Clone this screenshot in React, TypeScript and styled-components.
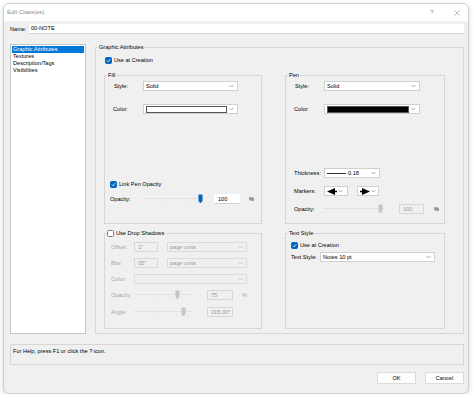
import React from "react";
import styled, { createGlobalStyle } from "styled-components";

const FONT = `"Liberation Sans", Arial, sans-serif`;

const Global = createGlobalStyle`
  html, body { margin: 0; padding: 0; background: #ffffff; }
  body { font-family: ${FONT}; font-size: 5.6px; line-height: 7px; color: #000; }
  * { box-sizing: border-box; }
`;

const Window = styled.div`
  margin: 3px 0 0 3px;
  width: 466px;
  height: 391px;
  border: 1px solid #cfcfcf;
  border-radius: 6px;
  box-shadow: 0 2px 5px rgba(0, 0, 0, 0.16);
  background: #f0f0f0;
  overflow: hidden;
  display: flex;
  flex-direction: column;
`;

const TitleBar = styled.div`
  height: 17px;
  flex: none;
  background: #ffffff;
  display: flex;
  align-items: center;
  padding-left: 3px;
  color: #8c8c8c;
  font-size: 6px;
`;

const TitleButtons = styled.div`
  margin-left: auto;
  display: flex;
  gap: 3px;
`;

const TitleBtn = styled.div`
  width: 22px;
  height: 17px;
  display: flex;
  align-items: center;
  justify-content: center;
  color: #8c8c8c;
  font-size: 6px;
`;

const Body = styled.div`
  flex: 1;
  display: flex;
  flex-direction: column;
  padding: 3px 4px 0 6px;
`;

const NameRow = styled.div`
  display: flex;
  align-items: center;
  height: 10px;
`;

const NameLabel = styled.span`
  width: 19px;
  flex: none;
`;

const NameInput = styled.div`
  flex: 1;
  height: 10px;
  background: #ffffff;
  border-bottom: 1px solid #d6d6d6;
  padding-left: 2px;
  display: flex;
  align-items: center;
`;

const MainRow = styled.div`
  display: flex;
  margin-top: 10px;
  height: 290px;
  gap: 9px;
`;

const ListBox = styled.div`
  width: 76px;
  flex: none;
  background: #ffffff;
  border: 1px solid #c4c4c4;
  padding: 1px;
`;

const ListItem = styled.div<{ $selected?: boolean }>`
  height: 7px;
  line-height: 7px;
  padding-left: 1px;
  background: ${(p) => (p.$selected ? "#0078d7" : "transparent")};
  color: ${(p) => (p.$selected ? "#ffffff" : "#000")};
`;

const Group = styled.div<{ $mt?: number }>`
  position: relative;
  border: 1px solid #d6d6d6;
  margin-top: ${(p) => p.$mt ?? 0}px;
  display: flex;
  flex-direction: column;
`;

const MainGroup = styled(Group)`
  flex: 1;
  margin-top: 3px;
`;

const Legend = styled.div<{ $left?: number }>`
  position: absolute;
  top: -4px;
  left: ${(p) => p.$left ?? 2}px;
  padding: 0 1px;
  line-height: 7px;
  background: #f0f0f0;
  display: flex;
  align-items: center;
`;

const CheckRow = styled.div<{ $mt?: number; $pl?: number }>`
  display: flex;
  align-items: center;
  height: 7px;
  margin-top: ${(p) => p.$mt ?? 0}px;
  padding-left: ${(p) => p.$pl ?? 0}px;
`;

const Box = styled.span<{ $checked?: boolean }>`
  width: 7px;
  height: 7px;
  flex: none;
  border-radius: 1.5px;
  background: ${(p) => (p.$checked ? "#0067c0" : "#ffffff")};
  border: 1px solid ${(p) => (p.$checked ? "#0067c0" : "#7a7a7a")};
  display: flex;
  align-items: center;
  justify-content: center;
  margin-right: 2px;
`;

const Grid = styled.div`
  display: grid;
  grid-template-columns: 158px 160px;
  grid-template-rows: 149px 96px;
  column-gap: 23px;
  row-gap: 9px;
  margin: 11px 0 0 8px;
`;

const Row = styled.div<{ $mt?: number; $pl?: number }>`
  display: flex;
  align-items: center;
  height: 10px;
  margin-top: ${(p) => p.$mt ?? 0}px;
  padding-left: ${(p) => p.$pl ?? 0}px;
`;

const Label = styled.span<{ $w: number; $disabled?: boolean }>`
  width: ${(p) => p.$w}px;
  flex: none;
  color: ${(p) => (p.$disabled ? "#a6a6a6" : "#000")};
`;

const Select = styled.div<{ $w: number; $disabled?: boolean; $mr?: number }>`
  width: ${(p) => p.$w}px;
  height: 10px;
  flex: none;
  margin-right: ${(p) => p.$mr ?? 0}px;
  background: ${(p) => (p.$disabled ? "#f0f0f0" : "#ffffff")};
  border: 1px solid ${(p) => (p.$disabled ? "#dadada" : "#d0d0d0")};
  color: ${(p) => (p.$disabled ? "#9a9a9a" : "#000")};
  display: flex;
  align-items: center;
  padding: 0 2px 0 2px;
`;

const SelectText = styled.span`
  flex: 1;
  display: flex;
  align-items: center;
  white-space: nowrap;
`;

const Swatch = styled.span<{ $color: string }>`
  flex: 1;
  height: 7px;
  background: ${(p) => p.$color};
  border: 1px solid #555;
  margin-right: 2px;
`;

const Input = styled.div<{ $w: number; $disabled?: boolean; $mr?: number }>`
  width: ${(p) => p.$w}px;
  height: 10px;
  flex: none;
  margin-right: ${(p) => p.$mr ?? 0}px;
  background: ${(p) => (p.$disabled ? "#f0f0f0" : "#ffffff")};
  border: 1px solid ${(p) => (p.$disabled ? "#d6d6d6" : "#ffffff")};
  border-bottom-color: ${(p) => (p.$disabled ? "#d6d6d6" : "#d0d0d0")};
  color: ${(p) => (p.$disabled ? "#9a9a9a" : "#000")};
  display: flex;
  align-items: center;
  padding-left: 3px;
`;

const Pct = styled.span<{ $disabled?: boolean }>`
  color: ${(p) => (p.$disabled ? "#a6a6a6" : "#000")};
`;

const Track = styled.div<{ $w: number; $mr: number }>`
  position: relative;
  width: ${(p) => p.$w}px;
  height: 10px;
  flex: none;
  margin-right: ${(p) => p.$mr}px;
  background:
    linear-gradient(#e2e2e2, #e2e2e2) 0 4px / 100% 1px no-repeat,
    repeating-linear-gradient(90deg, #dcdcdc 0 1px, transparent 1px 6px) 0 8px / 100% 1px no-repeat;
`;

const Thumb = styled.svg`
  position: absolute;
  top: 0;
  width: 5px;
  height: 10px;
  margin-left: -2.5px;
`;

const Line = styled.span`
  width: 19px;
  height: 1px;
  background: #333;
  margin-right: 2px;
`;

const StatusBar = styled.div`
  margin-top: 10px;
  height: 21px;
  border: 1px solid #d6d6d6;
  padding: 3px 2px;
`;

const ButtonRow = styled.div`
  margin-top: 7px;
  display: flex;
  justify-content: flex-end;
  gap: 9px;
`;

const Button = styled.div`
  width: 39px;
  height: 12px;
  background: #fdfdfd;
  border: 1px solid #dcdcdc;
  display: flex;
  align-items: center;
  justify-content: center;
`;

const Chevron = ({ disabled }: { disabled?: boolean }) => (
  <svg width="5" height="4" viewBox="0 0 5 4" style={{ flex: "none", marginRight: 1 }}>
    <polyline points="0.5,1 2.5,3 4.5,1" fill="none" stroke={disabled ? "#bbb" : "#888"} strokeWidth="0.7" />
  </svg>
);

const Check = () => (
  <svg width="5" height="5" viewBox="0 0 5 5">
    <polyline points="0.8,2.6 2,3.8 4.2,1.2" fill="none" stroke="#fff" strokeWidth="0.8" />
  </svg>
);

const Checkbox = ({ checked }: { checked?: boolean }) => <Box $checked={checked}>{checked && <Check />}</Box>;

const Slider = ({ w, mr, value, disabled }: { w: number; mr: number; value: number; disabled?: boolean }) => (
  <Track $w={w} $mr={mr}>
    <Thumb viewBox="0 0 5 10" style={{ left: `${value}%` }}>
      <path
        d="M0.5 1.2 Q0.5 0.5 1.2 0.5 H3.8 Q4.5 0.5 4.5 1.2 V7 L2.5 9.3 L0.5 7 Z"
        fill={disabled ? "#c6c6c6" : "#0067c0"}
      />
    </Thumb>
  </Track>
);

const Arrow = ({ dir }: { dir: "left" | "right" }) => (
  <svg width="10" height="7" viewBox="0 0 10 7" style={{ marginRight: 1, flex: "none" }}>
    {dir === "left" ? (
      <polygon points="0,3.5 8,0 8,2.7 10,2.7 10,4.3 8,4.3 8,7" fill="#000" />
    ) : (
      <polygon points="10,3.5 2,0 2,2.7 0,2.7 0,4.3 2,4.3 2,7" fill="#000" />
    )}
  </svg>
);

const CloseIcon = () => (
  <svg width="6" height="6" viewBox="0 0 6 6">
    <path d="M0.5 0.5 L5.5 5.5 M5.5 0.5 L0.5 5.5" stroke="#8c8c8c" strokeWidth="0.6" />
  </svg>
);

export default function App() {
  return (
    <>
      <Global />
      <Window>
        <TitleBar>
          Edit Class(es)
          <TitleButtons>
            <TitleBtn>?</TitleBtn>
            <TitleBtn>
              <CloseIcon />
            </TitleBtn>
          </TitleButtons>
        </TitleBar>
        <Body>
          <NameRow>
            <NameLabel>Name:</NameLabel>
            <NameInput>00-NOTE</NameInput>
          </NameRow>
          <MainRow>
            <ListBox>
              <ListItem $selected>Graphic Attributes</ListItem>
              <ListItem>Textures</ListItem>
              <ListItem>Description/Tags</ListItem>
              <ListItem>Visibilities</ListItem>
            </ListBox>
            <MainGroup>
              <Legend>Graphic Attributes</Legend>
              <CheckRow $mt={9} $pl={9}>
                <Checkbox checked />
                Use at Creation
              </CheckRow>
              <Grid>
                <Group>
                  <Legend>Fill</Legend>
                  <Row $mt={5} $pl={9}>
                    <Label $w={29}>Style:</Label>
                    <Select $w={95}>
                      <SelectText>Solid</SelectText>
                      <Chevron />
                    </Select>
                  </Row>
                  <Row $mt={13} $pl={8}>
                    <Label $w={30}>Color:</Label>
                    <Select $w={95}>
                      <Swatch $color="#ffffff" />
                      <Chevron />
                    </Select>
                  </Row>
                  <CheckRow $mt={67} $pl={5}>
                    <Checkbox checked />
                    Link Pen Opacity
                  </CheckRow>
                  <Row $mt={6} $pl={5}>
                    <Label $w={33}>Opacity:</Label>
                    <Slider w={62} mr={9} value={92} />
                    <Input $w={26} $mr={9}>100</Input>
                    <Pct>%</Pct>
                  </Row>
                </Group>
                <Group>
                  <Legend>Pen</Legend>
                  <Row $mt={5} $pl={9}>
                    <Label $w={29}>Style:</Label>
                    <Select $w={96}>
                      <SelectText>Solid</SelectText>
                      <Chevron />
                    </Select>
                  </Row>
                  <Row $mt={13} $pl={8}>
                    <Label $w={30}>Color:</Label>
                    <Select $w={96}>
                      <Swatch $color="#000000" />
                      <Chevron />
                    </Select>
                  </Row>
                  <Row $mt={54} $pl={8}>
                    <Label $w={30}>Thickness:</Label>
                    <Select $w={56}>
                      <SelectText>
                        <Line />
                        0.18
                      </SelectText>
                      <Chevron />
                    </Select>
                  </Row>
                  <Row $mt={8} $pl={8}>
                    <Label $w={30}>Markers:</Label>
                    <Select $w={24} $mr={9}>
                      <Arrow dir="left" />
                      <Chevron />
                    </Select>
                    <Select $w={22}>
                      <Arrow dir="right" />
                      <Chevron />
                    </Select>
                  </Row>
                  <Row $mt={8} $pl={8}>
                    <Label $w={30}>Opacity:</Label>
                    <Slider w={60} mr={15} value={94} disabled />
                    <Input $w={25} $mr={10} $disabled>
                      100
                    </Input>
                    <Pct>%</Pct>
                  </Row>
                </Group>
                <Group>
                  <Legend $left={1}>
                    <Checkbox />
                    Use Drop Shadows
                  </Legend>
                  <Row $mt={8} $pl={6}>
                    <Label $w={23} $disabled>
                      Offset:
                    </Label>
                    <Input $w={24} $mr={9} $disabled>
                      1"
                    </Input>
                    <Select $w={80} $disabled>
                      <SelectText>page units</SelectText>
                      <Chevron disabled />
                    </Select>
                  </Row>
                  <Row $mt={6} $pl={6}>
                    <Label $w={23} $disabled>
                      Blur:
                    </Label>
                    <Input $w={24} $mr={9} $disabled>
                      05"
                    </Input>
                    <Select $w={80} $disabled>
                      <SelectText>page units</SelectText>
                      <Chevron disabled />
                    </Select>
                  </Row>
                  <Row $mt={6} $pl={6}>
                    <Label $w={23} $disabled>
                      Color:
                    </Label>
                    <Select $w={113} $disabled>
                      <SelectText />
                      <Chevron disabled />
                    </Select>
                  </Row>
                  <Row $mt={6} $pl={6}>
                    <Label $w={23} $disabled>
                      Opacity:
                    </Label>
                    <Slider w={59} mr={14} value={74} disabled />
                    <Input $w={26} $mr={9} $disabled>
                      75
                    </Input>
                    <Pct $disabled>%</Pct>
                  </Row>
                  <Row $mt={7} $pl={6}>
                    <Label $w={23} $disabled>
                      Angle:
                    </Label>
                    <Slider w={59} mr={14} value={84} disabled />
                    <Input $w={26} $disabled>
                      315.00°
                    </Input>
                  </Row>
                </Group>
                <Group>
                  <Legend>Text Style</Legend>
                  <CheckRow $mt={8} $pl={5}>
                    <Checkbox checked />
                    Use at Creation
                  </CheckRow>
                  <Row $mt={3} $pl={5}>
                    <Label $w={29}>Text Style:</Label>
                    <Select $w={115}>
                      <SelectText>Notes 10 pt</SelectText>
                      <Chevron />
                    </Select>
                  </Row>
                </Group>
              </Grid>
            </MainGroup>
          </MainRow>
          <StatusBar>For Help, press F1 or click the ? icon.</StatusBar>
          <ButtonRow>
            <Button>OK</Button>
            <Button>Cancel</Button>
          </ButtonRow>
        </Body>
      </Window>
    </>
  );
}
